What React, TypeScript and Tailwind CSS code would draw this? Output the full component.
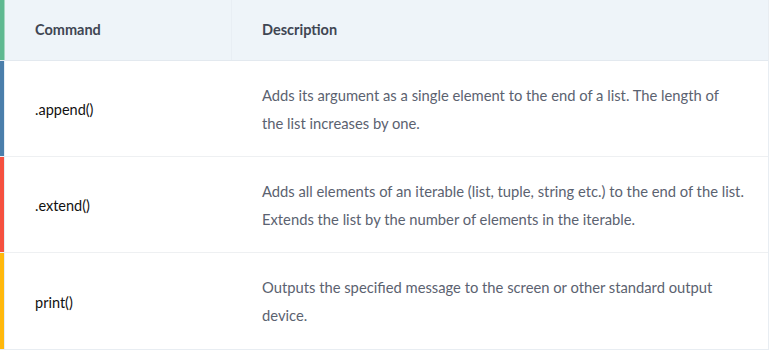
import React from "react";

const rows = [
  {
    color: "bg-[#4a7eab]",
    cmd: ".append()",
    desc: (
      <>
        Adds its argument as a single element to the end of a list. The length of
        <br />
        the list increases by one.
      </>
    ),
  },
  {
    color: "bg-[#f5503f]",
    cmd: ".extend()",
    desc: (
      <>
        Adds all elements of an iterable (list, tuple, string etc.) to the end of the list.
        <br />
        Extends the list by the number of elements in the iterable.
      </>
    ),
  },
  {
    color: "bg-[#ffb80c]",
    cmd: "print()",
    desc: (
      <>
        Outputs the specified message to the screen or other standard output
        <br />
        device.
      </>
    ),
  },
];

export default function App() {
  return (
    <div
      className="w-[770px] h-[351px] bg-white"
      style={{ fontFamily: "Lato, 'Open Sans', sans-serif" }}
    >
      <div className="w-[769px] border-r border-[#e8edf2] border-b">
        <div className="flex h-[61px] bg-[#eef4f9] border-b border-[#e3e9ef]">
          <div className="w-[4px] bg-[#5fb991] shrink-0" />
          <div className="w-[1px] bg-[#a9d8c2] shrink-0" />
          <div className="w-[227px] shrink-0 flex items-center pl-[30px] text-[14.5px] font-bold text-[#3f4653] border-r border-[#e8eef4]">
            Command
          </div>
          <div className="flex-1 flex items-center pl-[30px] text-[14.5px] font-bold text-[#3f4653]">
            Description
          </div>
        </div>
        {rows.map((r, i) => (
          <div
            key={i}
            className={`flex h-[96px] ${i < rows.length - 1 ? "border-b border-[#eef0f2]" : ""}`}
          >
            <div className={`w-[4px] shrink-0 ${r.color}`} />
            <div className="w-[1px] bg-[#e6eef5] shrink-0" />
            <div className="w-[227px] shrink-0 flex items-center pl-[30px] pt-[3px] text-[14.5px] text-[#111111]">
              {r.cmd}
            </div>
            <div className="flex-1 flex items-center pl-[30px] pr-[16px] text-[14.75px] leading-[28px] text-[#5b6270] whitespace-nowrap">
              <div>{r.desc}</div>
            </div>
          </div>
        ))}
      </div>
    </div>
  );
}
